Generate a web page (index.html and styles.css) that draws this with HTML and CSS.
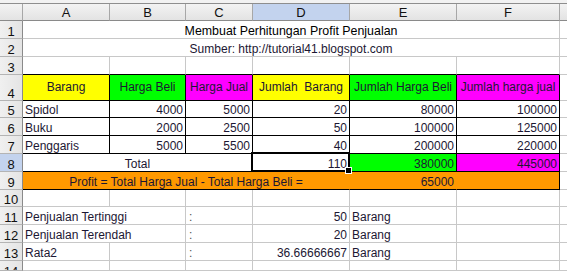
FILE: index.html
```html
<!DOCTYPE html>
<html>
<head>
<meta charset="utf-8">
<link rel="stylesheet" href="styles.css">
</head>
<body>
<div class="strip"></div>
<div class="sheet">
  <div class="ch corner"></div>
  <div class="ch">A</div><div class="ch">B</div><div class="ch">C</div><div class="ch selh">D</div><div class="ch">E</div><div class="ch">F</div><div class="ch last"></div>

  <div class="rh">1</div>
  <div class="c span6 ctr title">Membuat Perhitungan Profit Penjualan</div>
  <div class="c g"></div>

  <div class="rh">2</div>
  <div class="c span6 ctr">Sumber: http://tutorial41.blogspot.com</div>
  <div class="c g"></div>

  <div class="rh">3</div>
  <div class="c bb"></div><div class="c bb"></div><div class="c bb"></div><div class="c bb"></div><div class="c bb"></div><div class="c bb"></div>
  <div class="c g"></div>

  <div class="rh">4</div>
  <div class="c k mid ctr yel">Barang</div>
  <div class="c k mid ctr grn">Harga Beli</div>
  <div class="c k mid ctr mag">Harga Jual</div>
  <div class="c k mid ctr yel pre">Jumlah  Barang</div>
  <div class="c k mid ctr grn">Jumlah Harga Beli</div>
  <div class="c k mid ctr mag">Jumlah harga jual</div>
  <div class="c g"></div>

  <div class="rh">5</div>
  <div class="c k">Spidol</div><div class="c k r">4000</div><div class="c k r">5000</div><div class="c k r">20</div><div class="c k r">80000</div><div class="c k r">100000</div>
  <div class="c g"></div>

  <div class="rh">6</div>
  <div class="c k">Buku</div><div class="c k r">2000</div><div class="c k r">2500</div><div class="c k r">50</div><div class="c k r">100000</div><div class="c k r">125000</div>
  <div class="c g"></div>

  <div class="rh">7</div>
  <div class="c k">Penggaris</div><div class="c k r">5000</div><div class="c k r">5500</div><div class="c k r">40</div><div class="c k r">200000</div><div class="c k r">220000</div>
  <div class="c g"></div>

  <div class="rh selh">8</div>
  <div class="c k span3 ctr">Total</div>
  <div class="c k r sel">110</div>
  <div class="c k r grn">380000</div>
  <div class="c k r mag">445000</div>
  <div class="c g"></div>

  <div class="rh">9</div>
  <div class="c k span4 ctr org nob">Profit = Total Harga Jual - Total Harga Beli =</div>
  <div class="c k r org nob">65000</div>
  <div class="c k org"></div>
  <div class="c g"></div>

  <div class="rh">10</div>
  <div class="c"></div><div class="c"></div><div class="c"></div><div class="c"></div><div class="c"></div><div class="c"></div>
  <div class="c g"></div>

  <div class="rh">11</div>
  <div class="c span2">Penjualan Tertinggi</div><div class="c colon">:</div><div class="c r">50</div><div class="c">Barang</div><div class="c"></div>
  <div class="c g"></div>

  <div class="rh">12</div>
  <div class="c span2">Penjualan Terendah</div><div class="c colon">:</div><div class="c r">20</div><div class="c">Barang</div><div class="c"></div>
  <div class="c g"></div>

  <div class="rh">13</div>
  <div class="c">Rata2</div><div class="c"></div><div class="c colon">:</div><div class="c r">36.66666667</div><div class="c">Barang</div><div class="c"></div>
  <div class="c g"></div>

  <div class="rh partial">14</div>
  <div class="c"></div><div class="c"></div><div class="c"></div><div class="c"></div><div class="c"></div><div class="c"></div>
  <div class="c g"></div>
</div>
</body>
</html>
```

FILE: styles.css
```css
html, body {
  margin: 0;
  padding: 0;
  background: #ffffff;
  overflow: hidden;
}

body {
  width: 567px;
  height: 271px;
  font-family: "Liberation Sans", Arial, sans-serif;
  font-size: 12px;
}

.strip {
  height: 3px;
  background: #f2f2f2;
  border-bottom: 1px solid #8e8e8e;
}

.sheet {
  display: grid;
  grid-template-columns: 23px 87px 76px 67px 97px 107px 103px 1fr;
  grid-template-rows: 17px 18px 18px 18px 26px 17px 18px 18px 18px 18px 17px 18px 18px 18px 10px;
  height: 267px;
}

.sheet > div {
  box-sizing: border-box;
  min-width: 0;
  overflow: hidden;
  white-space: nowrap;
}

.ch {
  background: linear-gradient(#f3f3f3, #e3e3e3);
  border-right: 1px solid #a7a7a7;
  border-bottom: 1px solid #8a8a8a;
  color: #111;
  display: flex;
  align-items: center;
  justify-content: center;
  line-height: 13px;
  font-size: 13px;
}

.ch.last {
  border-right: none;
}

.rh {
  background: linear-gradient(90deg, #f0f0f0, #e4e4e4);
  border-right: 1px solid #8a8a8a;
  border-bottom: 1px solid #b4b4b4;
  color: #111;
  display: flex;
  align-items: flex-end;
  justify-content: center;
  line-height: 13px;
  font-size: 13px;
}

.rh.partial {
  align-items: flex-start;
  padding-top: 4px;
}

.selh {
  background: #c3d3ee;
}

.c {
  border-right: 1px solid #c8c8c8;
  border-bottom: 1px solid #c8c8c8;
  display: flex;
  align-items: flex-end;
  justify-content: flex-start;
  padding: 0 2px;
  line-height: 13px;
  color: #1c1733;
}

.c.title {
  color: #000;
  font-size: 12.4px;
}

.c.g {
  border-right: none;
  padding: 0;
}

.span2 { grid-column: span 2; }
.span3 { grid-column: span 3; }
.span4 { grid-column: span 4; }
.span6 { grid-column: span 6; }

.ctr { justify-content: center; }
.r { justify-content: flex-end; }
.mid { align-items: center; }
.pre { white-space: pre !important; }
.colon { padding-left: 3px; color: #555; }

.bb { border-bottom-color: #000; }
.k {
  border-right-color: #000;
  border-bottom-color: #000;
}

.yel { background: #ffff00; }
.grn { background: #00ff00; }
.mag { background: #ff00ff; }
.org { background: #ff9900; }

.nob { border-right-color: transparent; }

.sel {
  position: relative;
  overflow: visible !important;
}

.sel::after {
  content: "";
  position: absolute;
  left: -2px;
  top: -2px;
  right: -1px;
  bottom: -1px;
  border: 2px solid #000;
  pointer-events: none;
}

.sel::before {
  content: "";
  position: absolute;
  right: -3px;
  bottom: -3px;
  width: 5px;
  height: 5px;
  background: #000;
  border: 1px solid #fff;
  z-index: 2;
}
```
